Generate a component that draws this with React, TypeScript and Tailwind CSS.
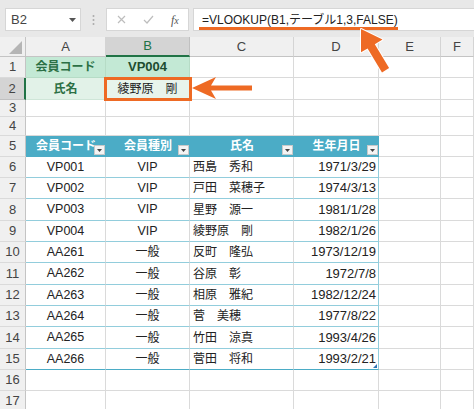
import React from 'react';

const ORANGE = '#ee6a24';

// column widths: row header, A..F
const W = ['w-[26px]', 'w-[80px]', 'w-[84px]', 'w-[104px]', 'w-[85px]', 'w-[62px]', 'w-[33px]'];

type Member = { code: string; kind: string; name: string; born: string };

const members: Member[] = [
  { code: 'VP001', kind: 'VIP', name: '西島　秀和', born: '1971/3/29' },
  { code: 'VP002', kind: 'VIP', name: '戸田　菜穂子', born: '1974/3/13' },
  { code: 'VP003', kind: 'VIP', name: '星野　源一', born: '1981/1/28' },
  { code: 'VP004', kind: 'VIP', name: '綾野原　剛', born: '1982/1/26' },
  { code: 'AA261', kind: '一般', name: '反町　隆弘', born: '1973/12/19' },
  { code: 'AA262', kind: '一般', name: '谷原　彰', born: '1972/7/8' },
  { code: 'AA263', kind: '一般', name: '相原　雅紀', born: '1982/12/24' },
  { code: 'AA264', kind: '一般', name: '菅　美穂', born: '1977/8/22' },
  { code: 'AA265', kind: '一般', name: '竹田　涼真', born: '1993/4/26' },
  { code: 'AA266', kind: '一般', name: '菅田　将和', born: '1993/2/21' },
];

const bodyHeights = ['h-[21px]', 'h-[21px]', 'h-[22px]', 'h-[21px]', 'h-[21px]', 'h-[22px]', 'h-[21px]', 'h-[21px]', 'h-[22px]', 'h-[21px]'];

function RowHead({ n, h, active }: { n: number; h: string; active?: boolean }) {
  return (
    <div
      className={`${W[0]} ${h} flex shrink-0 items-center justify-center border-b text-[13px] text-[#444] ${
        active ? 'border-b-[#c0c0c0] border-r-2 border-r-[#217346] bg-[#d4d4d4]' : 'border-r border-r-[#c4c4c4] border-b-[#dadada] bg-[#f0f0f0]'
      }`}
    >
      {n}
    </div>
  );
}

function Blank({ i, h }: { i: number; h: string }) {
  return <div className={`${W[i]} ${h} shrink-0 border-r border-b border-[#dadada]`} />;
}

function FilterBtn() {
  return (
    <div className="absolute right-[1px] bottom-[2px] flex h-[10px] w-[11px] items-center justify-center border border-[#c9c9c9] bg-[#f4f4f4]">
      <svg width="5" height="3" viewBox="0 0 5 3">
        <path d="M0 0h5L2.5 3z" fill="#444" />
      </svg>
    </div>
  );
}

function EmptyRow({ n, h }: { n: number; h: string }) {
  return (
    <div className="flex">
      <RowHead n={n} h={h} />
      {[1, 2, 3, 4, 5, 6].map((i) => (
        <Blank key={i} i={i} h={h} />
      ))}
    </div>
  );
}

export default function App() {
  const lat = 'font-["Liberation_Sans","Noto_Sans_CJK_JP",sans-serif]';
  return (
    <div className={`relative h-[409px] w-[474px] overflow-hidden bg-white ${lat} text-[#222]`}>
      {/* toolbar */}
      <div className="flex h-[37px] items-start bg-[#e8e8e8] pt-[8px] pl-[5px]">
        <div className="flex h-[23px] w-[76px] items-center justify-between border border-[#d6d6d6] bg-white pr-[4px] pl-[5px] text-[13px] text-[#444]">
          B2
          <svg width="7" height="4" viewBox="0 0 7 4">
            <path d="M0 0h7L3.5 4z" fill="#555" />
          </svg>
        </div>
        <div className="flex h-[23px] w-[25px] items-center justify-center">
          <svg width="3" height="12" viewBox="0 0 3 12">
            <circle cx="1.5" cy="2" r="1" fill="#aaa" />
            <circle cx="1.5" cy="6" r="1" fill="#aaa" />
            <circle cx="1.5" cy="10" r="1" fill="#aaa" />
          </svg>
        </div>
        <div className="flex h-[23px] w-[83px] items-center border border-[#d6d6d6] bg-white">
          <svg className="ml-[10px]" width="9" height="9" viewBox="0 0 9 9">
            <path d="M1 1l7 7M8 1L1 8" stroke="#bdbdbd" strokeWidth="1.2" />
          </svg>
          <svg className="ml-[17px]" width="11" height="9" viewBox="0 0 11 9">
            <path d="M1 5l3 3 6-7" stroke="#bdbdbd" strokeWidth="1.2" fill="none" />
          </svg>
          <span className='ml-[17px] font-["Liberation_Serif",serif] text-[12px] text-[#555] italic'>
            f<span className="text-[10px]">x</span>
          </span>
        </div>
        <div className="ml-[4px] flex h-[23px] flex-1 items-center border border-[#d6d6d6] border-r-0 bg-white pl-[8px] text-[12px] text-[#222]">
          =VLOOKUP(B1,テーブル1,3,FALSE)
        </div>
      </div>

      {/* column headers */}
      <div className="flex h-[20px]">
        <div className={`${W[0]} relative shrink-0 border-r border-b border-[#c4c4c4] bg-[#f0f0f0]`}>
          <svg className="absolute right-[3px] bottom-[2px]" width="13" height="13" viewBox="0 0 13 13">
            <path d="M13 0v13H0z" fill="#b5b5b5" />
          </svg>
        </div>
        {['A', 'B', 'C', 'D', 'E', 'F'].map((c, i) => (
          <div
            key={c}
            className={`${W[i + 1]} flex shrink-0 items-center justify-center border-r text-[13px] text-[#444] ${
              c === 'B' ? 'border-b-2 border-r-[#c0c0c0] border-b-[#217346] bg-[#d4d4d4] text-[#217346]' : 'border-b border-[#c4c4c4] border-r-[#d4d4d4] bg-[#f0f0f0]'
            }`}
          >
            {c}
          </div>
        ))}
      </div>

      {/* row 1 */}
      <div className="flex">
        <RowHead n={1} h="h-[21px]" />
        <div className={`${W[1]} flex h-[21px] shrink-0 items-center justify-center border-r border-b border-[#b6dcc6] bg-[#c3e9d5] text-[12px] font-bold text-[#2c7045]`}>
          会員コード
        </div>
        <div className={`${W[2]} flex h-[21px] shrink-0 items-center justify-center border-r border-b border-[#b6dcc6] bg-[#c3e9d5] text-[13px] font-semibold text-[#1d4d30]`}>
          VP004
        </div>
        <Blank i={3} h="h-[21px]" />
        <Blank i={4} h="h-[21px]" />
        <Blank i={5} h="h-[21px]" />
        <Blank i={6} h="h-[21px]" />
      </div>

      {/* row 2 */}
      <div className="flex">
        <RowHead n={2} h="h-[22px]" active />
        <div className={`${W[1]} flex h-[22px] shrink-0 items-center justify-center border-r border-b border-[#cfe6d8] bg-[#e2f2e8] text-[12px] font-bold text-[#2c7045]`}>
          氏名
        </div>
        <div className={`${W[2]} flex h-[22px] shrink-0 items-center justify-center border-r border-b border-[#cfe6d8] bg-[#e8f4ec] text-[12px] text-[#222]`}>
          綾野原　剛
        </div>
        <Blank i={3} h="h-[22px]" />
        <Blank i={4} h="h-[22px]" />
        <Blank i={5} h="h-[22px]" />
        <Blank i={6} h="h-[22px]" />
      </div>

      <EmptyRow n={3} h="h-[17px]" />
      <EmptyRow n={4} h="h-[19px]" />

      {/* row 5: table header */}
      <div className="flex">
        <RowHead n={5} h="h-[21px]" />
        {['会員コード', '会員種別', '氏名', '生年月日'].map((t, i) => (
          <div
            key={t}
            className={`${W[i + 1]} relative flex h-[21px] shrink-0 items-center justify-center bg-[#4bacc6] pb-[1px] text-[12px] font-bold text-white`}
          >
            {t}
            <FilterBtn />
          </div>
        ))}
        <Blank i={5} h="h-[21px]" />
        <Blank i={6} h="h-[21px]" />
      </div>

      {/* table body */}
      {members.map((m, r) => {
        const h = bodyHeights[r];
        const last = r === members.length - 1;
        const bb = last ? 'border-b-[#4bacc6]' : 'border-b-[#92cddc]';
        return (
          <div key={m.code} className="flex">
            <RowHead n={r + 6} h={h} />
            <div className={`${W[1]} ${h} flex shrink-0 items-center justify-center border-r border-b border-r-[#dadada] ${bb} text-[12.5px]`}>
              {m.code}
            </div>
            <div className={`${W[2]} ${h} flex shrink-0 items-center justify-center border-r border-b border-r-[#dadada] ${bb} ${m.kind === 'VIP' ? 'text-[12.5px]' : 'text-[12px]'}`}>
              {m.kind}
            </div>
            <div className={`${W[3]} ${h} flex shrink-0 items-center border-r border-b border-r-[#dadada] ${bb} pl-[3px] text-[12px]`}>
              {m.name}
            </div>
            <div className={`${W[4]} ${h} relative flex shrink-0 items-center justify-end border-r border-b border-r-[#92cddc] ${bb} pr-[2px] text-[13px]`}>
              {m.born}
              {last && (
                <svg className="absolute right-[1px] bottom-[1px]" width="4" height="4" viewBox="0 0 4 4">
                  <path d="M4 0v4H0z" fill="#2e75b6" />
                </svg>
              )}
            </div>
            <Blank i={5} h={h} />
            <Blank i={6} h={h} />
          </div>
        );
      })}

      <EmptyRow n={16} h="h-[21px]" />
      <EmptyRow n={17} h="h-[21px]" />

      {/* annotations */}
      <svg className="pointer-events-none absolute top-0 left-0" width="474" height="409" viewBox="0 0 474 409">
        <rect x="199" y="27" width="199" height="3" fill={ORANGE} />
        <rect x="105.5" y="78.5" width="85" height="21" fill="none" stroke={ORANGE} strokeWidth="3" />
        <polygon points="192,88 216,77 211,85.5 252,85.5 252,90.5 211,90.5 216,99" fill={ORANGE} />
        <polygon
          points="361,29 382.5,39.6 374.8,44.2 389.1,68.1 382,72.4 367.6,48.4 361,52.3"
          fill={ORANGE}
          stroke="white"
          strokeWidth="2"
          strokeLinejoin="round"
          paintOrder="stroke"
        />
      </svg>
    </div>
  );
}
